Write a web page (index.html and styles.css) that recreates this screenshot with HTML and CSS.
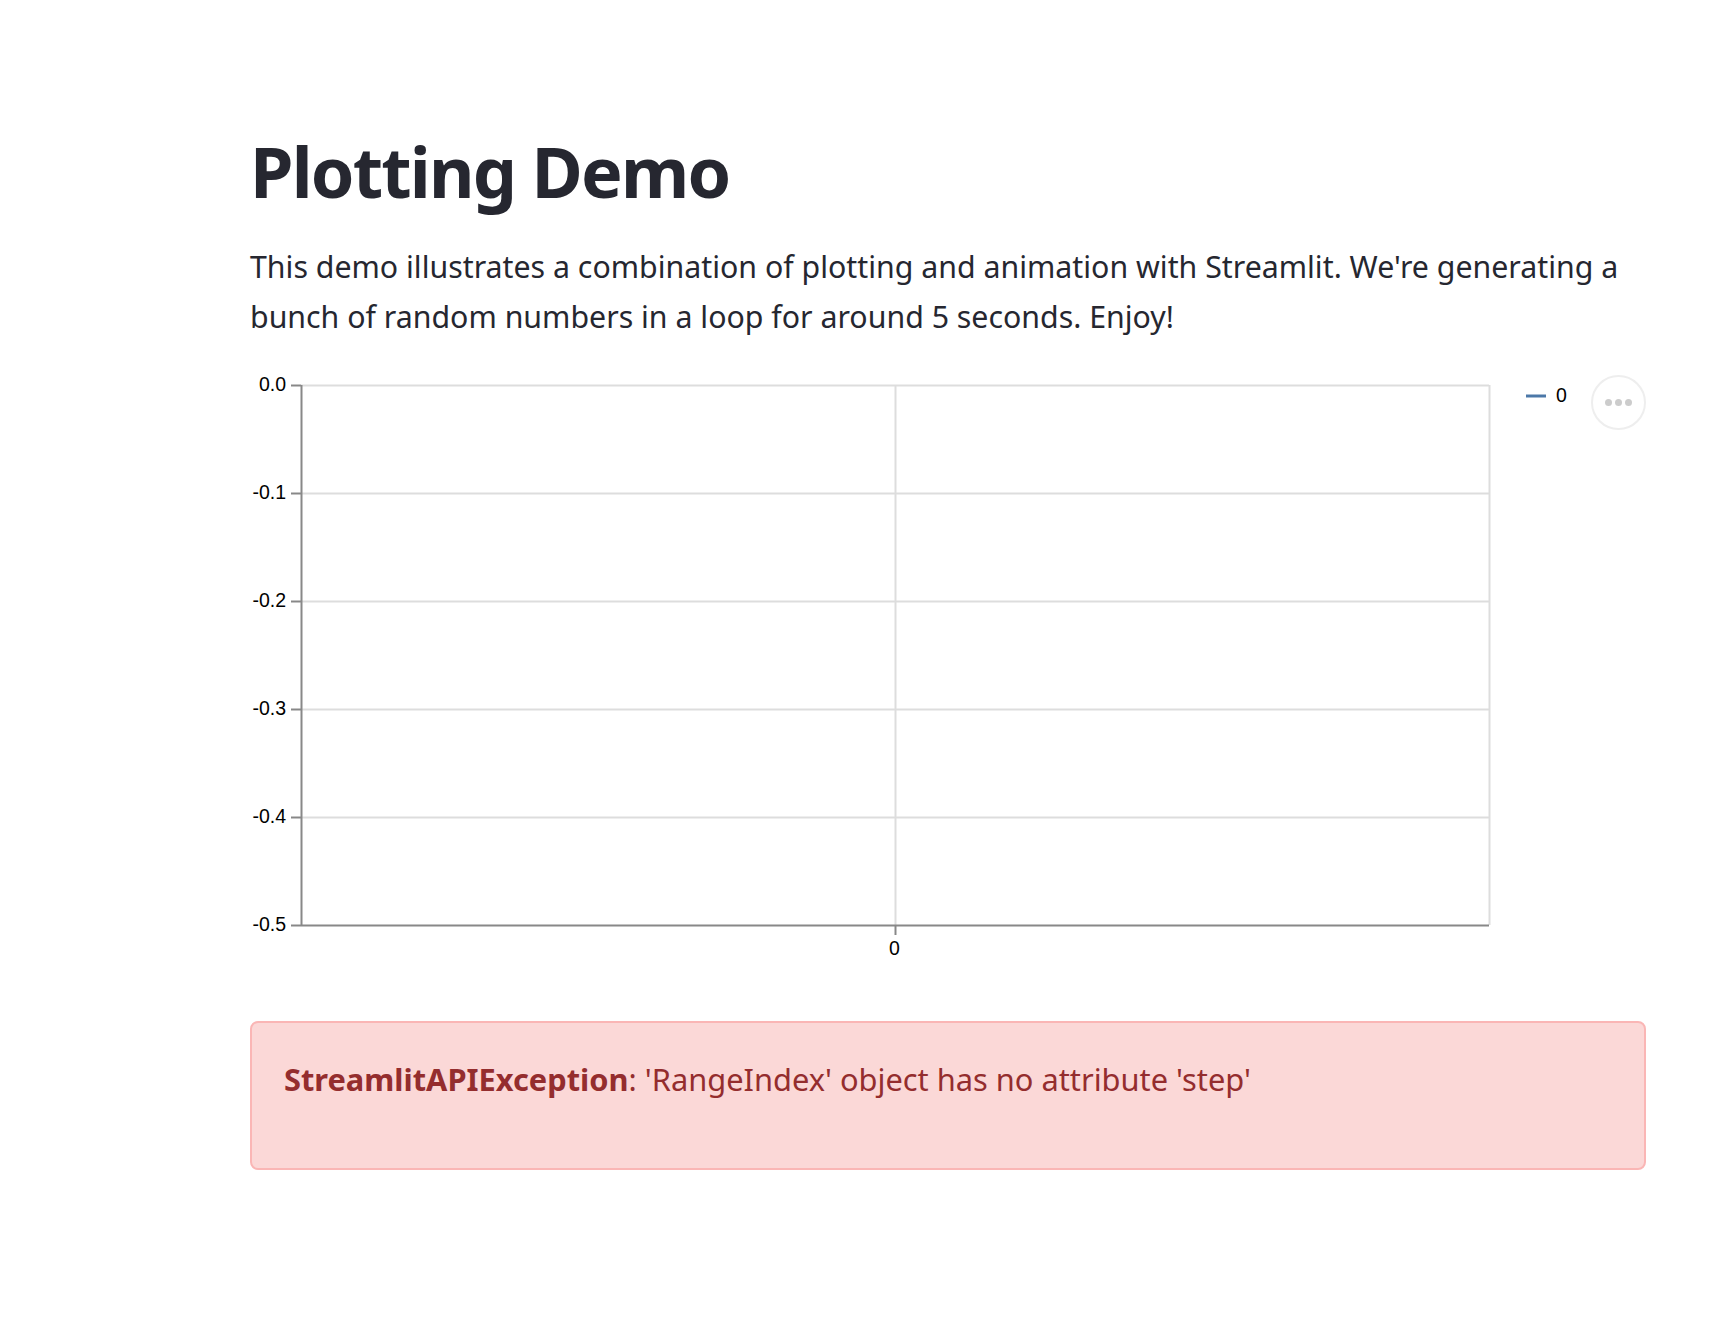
FILE: index.html
```html
<!DOCTYPE html>
<html lang="en">
<head>
    <meta charset="UTF-8">
    <title>Plotting Demo</title>
    <link rel="stylesheet" href="styles.css">
</head>
<body>
    <div class="main">
        <h1 class="title">Plotting Demo</h1>
        <p class="intro">This demo illustrates a combination of plotting and animation with Streamlit. We're generating a<br>bunch of random numbers in a loop for around 5 seconds. Enjoy!</p>
        <div class="chart">
            <svg class="plot" width="1396" height="590" viewBox="250 370 1396 590">
                <g class="grid">
                    <path d="M301 385.5H1489"/>
                    <path d="M301 493.5H1489"/>
                    <path d="M301 601.5H1489"/>
                    <path d="M301 709.5H1489"/>
                    <path d="M301 817.5H1489"/>
                    <path d="M895.5 385V925"/>
                    <path d="M1489.5 385V925"/>
                </g>
                <g class="axis">
                    <path d="M301.5 385V925.5"/>
                    <path d="M301 925.5H1489"/>
                    <path d="M291 385.5H301"/>
                    <path d="M291 493.5H301"/>
                    <path d="M291 601.5H301"/>
                    <path d="M291 709.5H301"/>
                    <path d="M291 817.5H301"/>
                    <path d="M291 925.5H301"/>
                    <path d="M895.5 925V935"/>
                </g>
                <g class="ticks">
                    <text x="286" y="391">0.0</text>
                    <text x="286" y="499">-0.1</text>
                    <text x="286" y="607">-0.2</text>
                    <text x="286" y="715">-0.3</text>
                    <text x="286" y="823">-0.4</text>
                    <text x="286" y="931">-0.5</text>
                    <text class="tick-x" x="894.5" y="955">0</text>
                </g>
                <path class="legend-line" d="M1526 396H1546"/>
                <text class="legend-text" x="1556" y="402">0</text>
            </svg>
            <button class="menu"><span></span><span></span><span></span></button>
        </div>
        <div class="alert"><strong>StreamlitAPIException</strong>: 'RangeIndex' object has no attribute 'step'</div>
    </div>
</body>
</html>
```

FILE: styles.css
```css
body {
    margin: 0;
    background-color: #fff;
    font-family: "Noto Sans", sans-serif;
    color: #262730;
}
.main {
    width: 1396px;
    margin-left: 250px;
    padding-top: 127px;
}
.title {
    margin: 0;
    font-size: 70px;
    line-height: 88px;
    font-weight: 700;
    letter-spacing: -1.8px;
}
.intro {
    margin: 27px 0 0;
    font-size: 30.3px;
    line-height: 50px;
}
.chart {
    position: relative;
    height: 590px;
    margin-top: 28px;
}
.plot {
    display: block;
}
.plot text {
    font-family: "Liberation Sans", sans-serif;
    font-size: 19.5px;
    fill: #000;
}
.grid path {
    stroke: #ddd;
    stroke-width: 2;
    fill: none;
}
.axis path {
    stroke: #888;
    stroke-width: 2;
    fill: none;
}
.ticks text {
    text-anchor: end;
}
.ticks .tick-x {
    text-anchor: middle;
}
.legend-line {
    stroke: #4c78a8;
    stroke-width: 3;
}
.menu {
    position: absolute;
    top: 5px;
    right: 0;
    display: flex;
    align-items: center;
    justify-content: center;
    gap: 3px;
    width: 55px;
    height: 55px;
    padding: 0;
    background-color: #fff;
    border: 2px solid #eee;
    border-radius: 50%;
}
.menu span {
    width: 7px;
    height: 7px;
    border-radius: 50%;
    background-color: #ccc;
}
.alert {
    box-sizing: border-box;
    height: 149px;
    margin-top: 61px;
    padding: 31px 32px;
    background-color: #fbd8d7;
    border: 2px solid #fab6b5;
    border-radius: 8px;
    color: #942d2e;
    font-size: 30.8px;
    line-height: 50px;
}
```
